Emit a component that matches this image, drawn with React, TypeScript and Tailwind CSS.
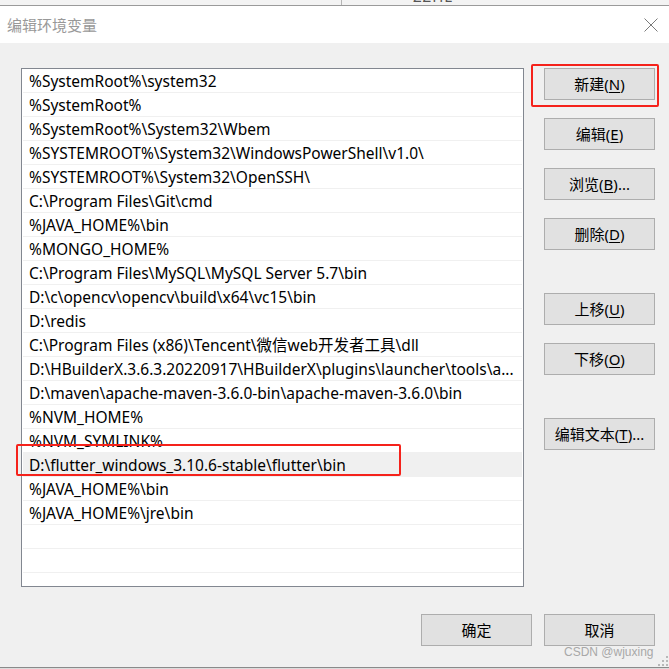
import React from "react";

const rows: string[] = [
  "%SystemRoot%\\system32",
  "%SystemRoot%",
  "%SystemRoot%\\System32\\Wbem",
  "%SYSTEMROOT%\\System32\\WindowsPowerShell\\v1.0\\",
  "%SYSTEMROOT%\\System32\\OpenSSH\\",
  "C:\\Program Files\\Git\\cmd",
  "%JAVA_HOME%\\bin",
  "%MONGO_HOME%",
  "C:\\Program Files\\MySQL\\MySQL Server 5.7\\bin",
  "D:\\c\\opencv\\opencv\\build\\x64\\vc15\\bin",
  "D:\\redis",
  "C:\\Program Files (x86)\\Tencent\\微信web开发者工具\\dll",
  "D:\\HBuilderX.3.6.3.20220917\\HBuilderX\\plugins\\launcher\\tools\\a...",
  "D:\\maven\\apache-maven-3.6.0-bin\\apache-maven-3.6.0\\bin",
  "%NVM_HOME%",
  "%NVM_SYMLINK%",
  "D:\\flutter_windows_3.10.6-stable\\flutter\\bin",
  "%JAVA_HOME%\\bin",
  "%JAVA_HOME%\\jre\\bin",
  "",
  "",
  "",
  "",
];

function Btn({ label, hot, suffix = "" }: { label: string; hot: string; suffix?: string }) {
  return (
    <div className="w-[111px] h-[32px] border border-[#adadad] bg-[#e1e1e1] flex items-center justify-center text-[15px] text-black leading-none pt-[1px]">
      <span>
        {label}(<span className="underline underline-offset-2">{hot}</span>){suffix}
      </span>
    </div>
  );
}

export default function App() {
  return (
    <div
      className="relative w-[669px] h-[669px] overflow-hidden bg-[#f0f0f0] flex flex-col"
      style={{ fontFamily: '"Noto Sans", "Noto Sans CJK SC", sans-serif' }}
    >
      {/* background window strip */}
      <div className="h-[6px] bg-[#f3f3f3] border-b border-[#9a9a9a] flex shrink-0 overflow-hidden">
        <div className="w-[342px] border-r border-[#b5b5b5] h-full" />
        <div className="ml-[71px] -mt-[11px] text-[15px] text-[#555] leading-none tracking-[1px]">ZZHE</div>
      </div>
      {/* title bar */}
      <div className="h-[37px] bg-white flex items-center justify-between shrink-0">
        <div className="pl-[7px] pt-[2px] text-[15px] text-[#999999] leading-none">编辑环境变量</div>
        <svg width="14" height="14" viewBox="0 0 14 14" className="mr-[11px] mt-[1px]">
          <path d="M0.5 0.5 L13.5 13.5 M13.5 0.5 L0.5 13.5" stroke="#7a7a7a" strokeWidth="1" fill="none" />
        </svg>
      </div>
      {/* body */}
      <div className="flex flex-col flex-1">
        <div className="flex mt-[25px]">
          <div className="ml-[21px] w-[503px] h-[519px] border border-[#828790] bg-white overflow-hidden px-[1px]">
            {rows.map((r, i) => (
              <div
                key={i}
                className={`h-[24px] border-b border-[#f0f0f0] flex items-center pl-[6px] pt-[3px] text-[15.5px] text-black leading-none whitespace-nowrap ${
                  i === 16 ? "bg-[#f0f0f0]" : ""
                }`}
              >
                {r}
              </div>
            ))}
          </div>
          <div className="ml-[20px] flex flex-col">
            <Btn label="新建" hot="N" />
            <div className="mt-[18px]"><Btn label="编辑" hot="E" /></div>
            <div className="mt-[18px]"><Btn label="浏览" hot="B" suffix="..." /></div>
            <div className="mt-[18px]"><Btn label="删除" hot="D" /></div>
            <div className="mt-[43px]"><Btn label="上移" hot="U" /></div>
            <div className="mt-[18px]"><Btn label="下移" hot="O" /></div>
            <div className="mt-[43px]"><Btn label="编辑文本" hot="T" suffix="..." /></div>
          </div>
        </div>
        <div className="flex justify-end mt-[27px] mr-[14px] gap-[12px]">
          <div className="w-[111px] h-[32px] border border-[#adadad] bg-[#e1e1e1] flex items-center justify-center text-[15px] text-black leading-none pt-[1px]">确定</div>
          <div className="w-[111px] h-[32px] border border-[#adadad] bg-[#e1e1e1] flex items-center justify-center text-[15px] text-black leading-none pt-[1px]">取消</div>
        </div>
      </div>
      <div className="h-[2px] border-t border-[#8a8a8a] bg-[#dcdcdc] shrink-0" />

      {/* red annotation boxes */}
      <div className="absolute left-[531px] top-[64px] w-[128px] h-[43px] border-2 border-[#f5221b] rounded-[2px]" />
      <div className="absolute left-[16px] top-[444px] w-[385px] h-[32px] border-2 border-[#f5221b] rounded-[2px]" />

      {/* watermark */}
      <div className="absolute left-[564px] top-[646px] text-[12px] text-[#a8a8a8] leading-none" style={{ fontFamily: '"Liberation Sans", sans-serif' }}>
        CSDN @wjuxing
      </div>
      {/* resize grip */}
      <svg className="absolute right-[1px] bottom-[3px]" width="10" height="10" viewBox="0 0 10 10">
        <rect x="8" y="0" width="2" height="2" fill="#b8b8b8" />
        <rect x="4" y="4" width="2" height="2" fill="#b8b8b8" />
        <rect x="8" y="4" width="2" height="2" fill="#b8b8b8" />
        <rect x="0" y="8" width="2" height="2" fill="#b8b8b8" />
        <rect x="4" y="8" width="2" height="2" fill="#b8b8b8" />
        <rect x="8" y="8" width="2" height="2" fill="#b8b8b8" />
      </svg>
    </div>
  );
}
